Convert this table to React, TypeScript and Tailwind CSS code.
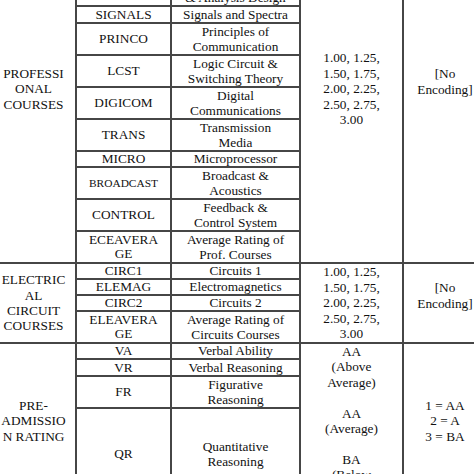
import React from "react";

type Row = {
  code: React.ReactNode;
  name: React.ReactNode;
  h: number;
  small?: boolean;
};

const cell = "border-2 border-[#464646] p-0 text-center align-middle";
const inner = "leading-[14px]";
const rowCell = `${cell} leading-[14px]`;
const spanCell = `${cell} leading-[15.4px]`;

const professional: Row[] = [
  { code: "ELECTRONICS", name: <>Electronic Devices<br />and Circuits</>, h: 59 },
  { code: "", name: <>Electronic Systems<br />&amp; Analysis Design</>, h: 32 },
  { code: "SIGNALS", name: "Signals and Spectra", h: 17 },
  { code: "PRINCO", name: <>Principles of<br />Communication</>, h: 31 },
  { code: "LCST", name: <>Logic Circuit &amp;<br />Switching Theory</>, h: 32 },
  { code: "DIGICOM", name: <>Digital<br />Communications</>, h: 32 },
  { code: "TRANS", name: <>Transmission<br />Media</>, h: 32 },
  { code: "MICRO", name: "Microprocessor", h: 16 },
  { code: "BROADCAST", name: <>Broadcast &amp;<br />Acoustics</>, h: 31, small: true },
  { code: "CONTROL", name: <>Feedback &amp;<br />Control System</>, h: 32 },
  { code: <>ECEAVERA<br />GE</>, name: <>Average Rating of<br />Prof. Courses</>, h: 32 },
];

const electrical: Row[] = [
  { code: "CIRC1", name: "Circuits 1", h: 16 },
  { code: "ELEMAG", name: "Electromagnetics", h: 16 },
  { code: "CIRC2", name: "Circuits 2", h: 16 },
  { code: <>ELEAVERA<br />GE</>, name: <>Average Rating of<br />Circuits Courses</>, h: 32 },
];

const preAdmission: Row[] = [
  { code: "VA", name: "Verbal Ability", h: 16 },
  { code: "VR", name: "Verbal Reasoning", h: 17 },
  { code: "FR", name: <>Figurative<br />Reasoning</>, h: 31 },
  { code: "QR", name: <>Quantitative<br />Reasoning</>, h: 91 },
];

const ratings = <>1.00, 1.25,<br />1.50, 1.75,<br />2.00, 2.25,<br />2.50, 2.75,<br />3.00</>;

function Section({
  label,
  rows,
  values,
  encoding,
  encodingPad,
}: {
  label: React.ReactNode;
  rows: Row[];
  values: React.ReactNode;
  encoding: React.ReactNode;
  encodingPad?: boolean;
}) {
  return (
    <>
      {rows.map((r, i) => (
        <tr key={i} style={{ height: r.h }}>
          {i === 0 && (
            <td rowSpan={rows.length} className={spanCell}>
              {label}
            </td>
          )}
          <td className={`${rowCell} ${r.small ? "text-[11.4px]" : ""}`}>
            <div className={inner}>{r.code}</div>
          </td>
          <td className={rowCell}>
            <div className={r.h > 20 ? "leading-[15px]" : inner}>{r.name}</div>
          </td>
          {i === 0 && (
            <>
              <td rowSpan={rows.length} className={spanCell}>
                {values}
              </td>
              <td
                rowSpan={rows.length}
                className={`${spanCell} ${encodingPad ? "pb-[15px]" : ""}`}
              >
                {encoding}
              </td>
            </>
          )}
        </tr>
      ))}
    </>
  );
}

export default function App() {
  return (
    <div className="w-[474px] h-[474px] overflow-hidden bg-white">
      <table
        className="table-fixed border-collapse -ml-[10px] -mt-[86px] w-[496px] text-[#111] text-[13.3px]"
        style={{ fontFamily: '"Liberation Serif", "Times New Roman", serif' }}
      >
        <colgroup>
          <col className="w-[85px]" />
          <col className="w-[95px]" />
          <col className="w-[129px]" />
          <col className="w-[103px]" />
          <col className="w-[84px]" />
        </colgroup>
        <tbody>
          <Section
            label={<>PROFESSI<br />ONAL<br />COURSES</>}
            rows={professional}
            values={ratings}
            encoding={<>[No<br />Encoding]</>}
            encodingPad
          />
          <Section
            label={<>ELECTRIC<br />AL<br />CIRCUIT<br />COURSES</>}
            rows={electrical}
            values={ratings}
            encoding={<>[No<br />Encoding]</>}
            encodingPad
          />
          <Section
            label={<>PRE-<br />ADMISSIO<br />N RATING</>}
            rows={preAdmission}
            values={
              <>
                AA<br />(Above<br />Average)<br /><br />AA<br />(Average)<br /><br />BA<br />(Below<br />Average)
              </>
            }
            encoding={<>1 = AA<br />2 = A<br />3 = BA</>}
          />
        </tbody>
      </table>
    </div>
  );
}
